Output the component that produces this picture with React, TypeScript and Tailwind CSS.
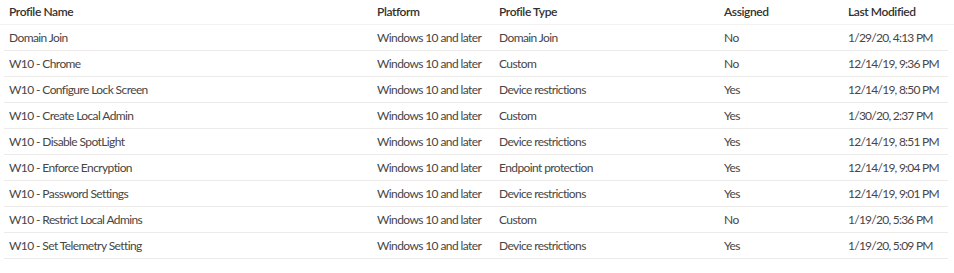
const rows = [
  ['Domain Join', 'Windows 10 and later', 'Domain Join', 'No', '1/29/20, 4:13 PM'],
  ['W10 - Chrome', 'Windows 10 and later', 'Custom', 'No', '12/14/19, 9:36 PM'],
  ['W10 - Configure Lock Screen', 'Windows 10 and later', 'Device restrictions', 'Yes', '12/14/19, 8:50 PM'],
  ['W10 - Create Local Admin', 'Windows 10 and later', 'Custom', 'Yes', '1/30/20, 2:37 PM'],
  ['W10 - Disable SpotLight', 'Windows 10 and later', 'Device restrictions', 'Yes', '12/14/19, 8:51 PM'],
  ['W10 - Enforce Encryption', 'Windows 10 and later', 'Endpoint protection', 'Yes', '12/14/19, 9:04 PM'],
  ['W10 - Password Settings', 'Windows 10 and later', 'Device restrictions', 'Yes', '12/14/19, 9:01 PM'],
  ['W10 - Restrict Local Admins', 'Windows 10 and later', 'Custom', 'No', '1/19/20, 5:36 PM'],
  ['W10 - Set Telemetry Setting', 'Windows 10 and later', 'Device restrictions', 'Yes', '1/19/20, 5:09 PM'],
];

const headers = ['Profile Name', 'Platform', 'Profile Type', 'Assigned', 'Last Modified'];

const cols = 'grid grid-cols-[368px_122px_225px_124px_1fr] items-center';

export default function App() {
  return (
    <div className="w-[954px] h-[273px] bg-white text-[12px] font-['Lato',sans-serif]">
      <div className={`${cols} h-[25px] pl-[9px] border-b border-[#f3f2f1] text-[#323130] tracking-[-0.4px]`}>
        {headers.map((h) => (
          <div key={h} className="font-semibold">{h}</div>
        ))}
      </div>
      <div className="ml-1 mr-[6px]">
        {rows.map((r) => (
          <div key={r[0]} className={`${cols} h-[26px] pl-[5px] border-b border-[#edebe9] text-[#484644] tracking-[-0.6px]`}>
            {r.map((c, i) => (
              <div key={i} className={i === 4 ? 'whitespace-nowrap tracking-[-0.75px]' : 'whitespace-nowrap'}>{c}</div>
            ))}
          </div>
        ))}
      </div>
    </div>
  );
}
